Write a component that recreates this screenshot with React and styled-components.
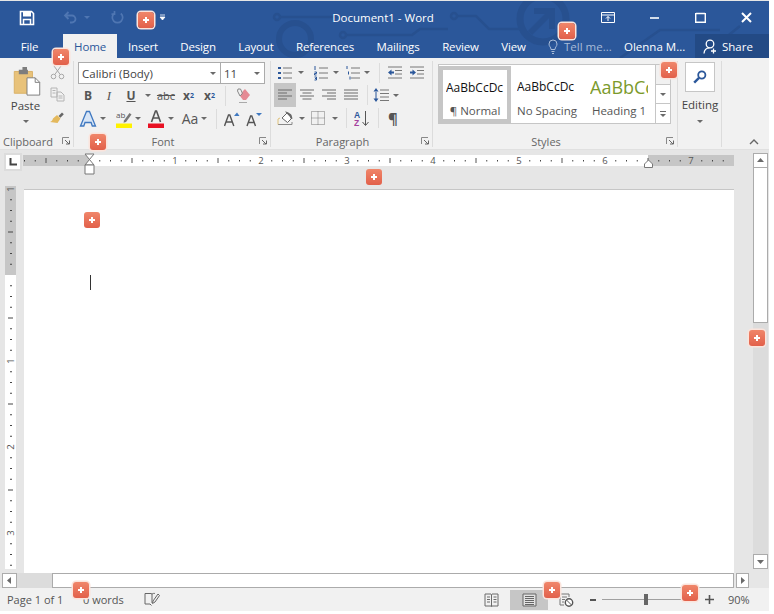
import React from 'react';
import styled, { createGlobalStyle } from 'styled-components';

const GlobalStyle = createGlobalStyle`
  html, body { margin: 0; padding: 0; background: #fff; }
  body { font-family: "Open Sans", "Liberation Sans", sans-serif; color: #444; }
`;

const Window = styled.div`
  position: relative;
  width: 769px;
  height: 610px;
  padding-top: 1px;
  display: flex;
  flex-direction: column;
  overflow: hidden;
  background: #e6e6e6;
`;

const Marker = styled.div`
  position: absolute;
  left: ${(p) => p.$x - 8}px;
  top: ${(p) => p.$y - 8}px;
  width: 16px;
  height: 16px;
  box-sizing: content-box;
  border-radius: 3px;
  background: linear-gradient(#f0866a, #e2604a);
  display: flex;
  align-items: center;
  justify-content: center;
  z-index: 5;
  ${(p) => p.$ring && 'box-shadow: 0 0 0 1.5px #fbe4dc;'}
  &::before, &::after {
    content: '';
    position: absolute;
    background: #fff;
  }
  &::before { width: 6px; height: 2px; }
  &::after { width: 2px; height: 6px; }
`;

/* title bar */
const Head = styled.div`
  position: relative;
  background: #2b579a;
  color: #fff;
`;
const Circuit = styled.svg`
  position: absolute;
  left: 0;
  top: 0;
  width: 769px;
  height: 57px;
`;
const TitleRow = styled.div`
  position: relative;
  height: 33px;
  display: flex;
  align-items: center;
`;
const Quick = styled.div`
  width: 270px;
  display: flex;
  align-items: center;
  padding-left: 19px;
  box-sizing: border-box;
`;
const QuickSlot = styled.div`
  width: ${(p) => p.$w}px;
  margin-left: ${(p) => p.$ml || 0}px;
  display: flex;
  justify-content: center;
`;
const DocTitle = styled.div`
  width: 226px;
  text-align: center;
  font-size: 11.5px;
  white-space: nowrap;
`;
const WinButtons = styled.div`
  flex: 1;
  display: flex;
  justify-content: flex-end;
`;
const WinButton = styled.div`
  width: 46px;
  display: flex;
  justify-content: center;
`;
const TabRow = styled.div`
  position: relative;
  height: 24px;
  display: flex;
  align-items: stretch;
`;
const Tab = styled.div`
  width: ${(p) => p.$w}px;
  margin-right: ${(p) => p.$mr || 0}px;
  display: flex;
  align-items: center;
  justify-content: center;
  font-size: 11.5px;
  letter-spacing: -0.15px;
  white-space: nowrap;
  ${(p) => p.$active && 'background: #f1f1f1; color: #2b579a;'}
`;
const TellMe = styled.div`
  width: 76px;
  margin-left: 11px;
  display: flex;
  align-items: center;
  gap: 6px;
  font-size: 11.5px;
  color: #a9bcd8;
`;
const Account = styled.div`
  width: 71px;
  display: flex;
  align-items: center;
  font-size: 11.5px;
  white-space: nowrap;
`;
const Share = styled.div`
  flex: 1;
  display: flex;
  align-items: center;
  gap: 4px;
  padding-left: 8px;
  background: #234a85;
  font-size: 11.5px;
`;

/* ribbon */
const Ribbon = styled.div`
  position: relative;
  height: 92px;
  background: #f1f1f1;
  display: flex;
  border-bottom: 1px solid #e0e0e0;
  box-sizing: border-box;
`;
const Group = styled.div`
  width: ${(p) => p.$w}px;
  flex: none;
  box-sizing: border-box;
  border-right: 1px solid #dcdcdc;
  margin: 3px 0 2px;
  display: flex;
  flex-direction: column;
`;
const GroupBody = styled.div`
  height: 72px;
  flex: none;
  display: flex;
`;
const GroupFoot = styled.div`
  flex: 1;
  display: flex;
  align-items: center;
  justify-content: ${(p) => (p.$left ? 'flex-start' : 'center')};
  font-size: 11px;
  color: #666;
  position: relative;
  padding-left: ${(p) => (p.$left ? 3 : 0)}px;
  padding-right: ${(p) => (p.$left ? 0 : 18)}px;
  margin-top: 1px;
`;
const Launcher = styled.svg`
  position: absolute;
  right: 3px;
  top: 3px;
  width: 8px;
  height: 8px;
`;
const PasteCol = styled.div`
  width: 51px;
  margin-right: -2px;
  padding-top: 5px;
  display: flex;
  flex-direction: column;
  align-items: center;
  font-size: 11.5px;
  color: #444;
`;
const PasteImage = styled.div`
  margin-left: 3px;
  height: 30px;
`;
const PasteLabel = styled.div`
  margin: 2px 0 6px;
  line-height: 16px;
`;
const ClipCol = styled.div`
  width: 16px;
  padding-top: 4px;
  display: flex;
  flex-direction: column;
  gap: 7px;
  align-items: center;
`;
const ToolStack = styled.div`
  padding: ${(p) => p.$pad || '1px 0 0 4px'};
  display: flex;
  flex-direction: column;
`;
const ComboRow = styled.div`
  display: flex;
  height: 22px;
  margin-bottom: 1px;
`;
const Combo = styled.div`
  width: ${(p) => p.$w}px;
  box-sizing: border-box;
  background: #fff;
  border: 1px solid #ababab;
  ${(p) => p.$tail && 'border-left: none;'}
  display: flex;
  align-items: center;
  justify-content: space-between;
  padding: 0 4px 0 3px;
  font-size: 11.5px;
  color: #444;
`;
const ToolRow = styled.div`
  display: flex;
  align-items: center;
  height: ${(p) => p.$h || 21}px;
`;
const Tool = styled.div`
  width: ${(p) => p.$w || 22}px;
  margin-left: ${(p) => p.$ml || 0}px;
  height: 100%;
  flex: none;
  display: flex;
  align-items: center;
  justify-content: center;
  color: #555;
  font-size: ${(p) => p.$size || 12}px;
  font-weight: ${(p) => (p.$bold ? 700 : 400)};
  font-style: ${(p) => (p.$italic ? 'italic' : 'normal')};
  ${(p) => p.$under && 'text-decoration: underline;'}
  ${(p) => p.$strike && 'text-decoration: line-through;'}
  ${(p) => p.$on && 'background: #c6c6c6;'}
  font-family: ${(p) => (p.$serif ? '"Liberation Serif", serif' : 'inherit')};
  sub, sup { font-size: 7px; line-height: 0; color: #2b579a; }
`;
const Caret = styled.span`
  width: 0;
  height: 0;
  flex: none;
  display: inline-block;
  border-left: 3px solid transparent;
  border-right: 3px solid transparent;
  border-top: 3px solid ${(p) => p.$color || '#6a6a6a'};
`;
const CaretSlot = styled.div`
  width: ${(p) => p.$w || 12}px;
  flex: none;
  display: flex;
  justify-content: center;
`;
const Sep = styled.div`
  width: 1px;
  height: 20px;
  flex: none;
  background: #dcdcdc;
  margin-left: ${(p) => p.$m ?? 5}px;
  margin-right: ${(p) => p.$mr ?? p.$m ?? 5}px;
`;
const Gallery = styled.div`
  margin: 3px 0 0 5px;
  width: 233px;
  height: 60px;
  box-sizing: border-box;
  background: #fff;
  border: 1px solid #c6c6c6;
  display: flex;
`;
const StyleItem = styled.div`
  width: 72px;
  flex: none;
  box-sizing: border-box;
  display: flex;
  flex-direction: column;
  padding-top: 9px;
  white-space: nowrap;
  ${(p) => p.$on && 'border: 4px solid #c6c6c6; padding-top: 5px; margin-top: 1px; height: 57px;'}
`;
const StyleSample = styled.div`
  box-sizing: content-box;
  width: ${(p) => p.$clip}px;
  margin-left: ${(p) => p.$ml}px;
  height: 26px;
  line-height: 26px;
  overflow: hidden;
  font-size: ${(p) => (p.$heading ? 18 : 12)}px;
  color: ${(p) => (p.$heading ? '#7b9a2c' : '#111')};
`;
const StyleName = styled.div`
  margin-top: 3px;
  text-align: center;
  font-size: 11.5px;
  line-height: 16px;
  color: #555;
`;
const GalleryArrows = styled.div`
  margin-left: auto;
  width: 15px;
  display: flex;
  flex-direction: column;
  border-left: 1px solid #c6c6c6;
`;
const GalleryArrow = styled.div`
  flex: 1;
  display: flex;
  align-items: center;
  justify-content: center;
  flex-direction: column;
  gap: 2px;
  background: ${(p) => (p.$off ? '#f1f1f1' : '#fff')};
  & + & { border-top: 1px solid #c6c6c6; }
`;
const Dash = styled.span`
  width: 6px;
  height: 1px;
  background: #6a6a6a;
`;
const EditingCol = styled.div`
  width: 44px;
  display: flex;
  flex-direction: column;
  align-items: center;
  font-size: 11.5px;
`;
const EditingIcon = styled.div`
  width: 30px;
  height: 30px;
  margin-top: 1px;
  box-sizing: border-box;
  background: #fff;
  border: 1px solid #c6c6c6;
  display: flex;
  align-items: center;
  justify-content: center;
`;
const EditingLabel = styled.div`
  margin: 5px 0 7px;
  line-height: 16px;
`;
const Collapse = styled.svg`
  position: absolute;
  right: 10px;
  bottom: 4px;
  width: 10px;
  height: 6px;
`;

/* workspace */
const Work = styled.div`
  flex: 1;
  display: flex;
  min-height: 0;
`;
const WorkMain = styled.div`
  width: 753px;
  display: flex;
  flex-direction: column;
`;
const RulerRow = styled.div`
  height: 38px;
  padding: 3px 0 0 4px;
  box-sizing: border-box;
  display: flex;
  align-items: flex-start;
`;
const TabStop = styled.div`
  width: 18px;
  height: 18px;
  margin-right: 1px;
  flex: none;
  box-sizing: border-box;
  background: #fff;
  border: 2px solid #dcdcdc;
  display: flex;
  align-items: center;
  justify-content: center;
`;
const RulerSvg = styled.svg`
  display: block;
  margin-top: 1px;
  overflow: visible;
`;
const DocRow = styled.div`
  flex: 1;
  display: flex;
  min-height: 0;
`;
const VRuler = styled.svg`
  margin: -2px 8px 0 5px;
  flex: none;
  display: block;
`;
const Sheet = styled.div`
  position: relative;
  width: 710px;
  margin-top: 1px;
  background: #fff;
  border-top: 1px solid #c6c6c6;
`;
const Cursor = styled.div`
  position: absolute;
  left: 66px;
  top: 85px;
  width: 1px;
  height: 15px;
  background: #333;
`;
const VScroll = styled.div`
  width: 15px;
  margin-top: 3px;
  display: flex;
  flex-direction: column;
`;
const ScrollBtn = styled.div`
  height: 15px;
  flex: none;
  box-sizing: border-box;
  background: #fff;
  border: 1px solid #ababab;
  display: flex;
  align-items: center;
  justify-content: center;
`;
const VThumb = styled.div`
  height: 155px;
  background: #fff;
  border: 1px solid #ababab;
  border-top: none;
  box-sizing: border-box;
`;
const VTrack = styled.div`
  height: 231px;
  background: #dcdcdc;
`;
const HScroll = styled.div`
  height: 15px;
  flex: none;
  padding-left: 2px;
  display: flex;
`;
const HBtn = styled(ScrollBtn)`
  width: ${(p) => p.$w || 15}px;
  margin-left: ${(p) => p.$ml || 0}px;
`;
const HTrack = styled.div`
  width: 35px;
  background: #dcdcdc;
`;
const HThumb = styled.div`
  width: 682px;
  box-sizing: border-box;
  background: #fff;
  border: 1px solid #ababab;
`;
const Status = styled.div`
  height: 23px;
  flex: none;
  background: #f1f1f1;
  display: flex;
  align-items: center;
  font-size: 11px;
  color: #555;
  white-space: nowrap;
`;
const StatusText = styled.div`
  width: ${(p) => p.$w}px;
  padding-left: ${(p) => p.$pl || 0}px;
  margin-left: ${(p) => p.$ml || 0}px;
  flex: none;
  box-sizing: border-box;
`;
const StatusIcon = styled.div`
  width: ${(p) => p.$w}px;
  margin-left: ${(p) => p.$ml || 0}px;
  height: 20px;
  flex: none;
  display: flex;
  align-items: center;
  justify-content: center;
  ${(p) => p.$on && 'background: #c6c6c6;'}
`;
const Zoomer = styled.div`
  position: relative;
  width: 80px;
  height: 1px;
  flex: none;
  background: #a0a0a0;
`;
const ZoomThumb = styled.div`
  position: absolute;
  left: 42px;
  top: -5px;
  width: 4px;
  height: 11px;
  background: #666;
`;

/* icons */
const Svg = ({ w = 16, h = 16, vb, children }) => (
  <svg width={w} height={h} viewBox={vb || `0 0 ${w} ${h}`} fill="none">{children}</svg>
);

const Save = () => (
  <Svg>
    <path d="M1.5 1.5h11l2 2v11h-13z" stroke="#fff" strokeWidth="1.6" />
    <path d="M4 2h8v4.5H4z" fill="#fff" />
    <path d="M4.5 14v-4.5h7V14" stroke="#fff" strokeWidth="1.5" />
  </Svg>
);
const Undo = () => (
  <Svg w={15} h={15}>
    <path d="M5.5 2 2 5.5 5.5 9M2.5 5.5h6.5a3.5 3.5 0 0 1 0 7H7" stroke="#4f76b2" strokeWidth="1.8" />
  </Svg>
);
const Redo = () => (
  <Svg w={15} h={15}>
    <path d="M4.2 3.5a5.2 5.2 0 1 0 6.6 0M4.5 1v3.2H1.5" stroke="#4f76b2" strokeWidth="1.7" />
  </Svg>
);
const Bulb = () => (
  <Svg w={10} h={15}>
    <path d="M3 10.5C3 8 1 7.5 1 5a4 4 0 0 1 8 0c0 2.5-2 3-2 5.5zM3.5 12.5h3M4 14.5h2" stroke="#a9bcd8" />
  </Svg>
);
const Person = () => (
  <Svg w={15} h={15}>
    <circle cx="7" cy="5" r="3.8" stroke="#fff" strokeWidth="1.3" />
    <path d="M1 14.5c.3-3.5 2.5-5.5 5.5-5.6M10.5 9.5v5M8 12h5" stroke="#fff" strokeWidth="1.3" />
  </Svg>
);
const PasteIcon = () => (
  <Svg w={28} h={30} vb="0 0 30 33">
    <path d="M1 6h20v24H1z" fill="#e8c27a" stroke="#d8ae62" />
    <path d="M7 4h8V1H10v3M6 4h10v5H6z" fill="#7d7d7d" />
    <path d="M15 13h9l5 5v14H15z" fill="#fff" stroke="#777" />
    <path d="M24 13v5h5" stroke="#777" />
  </Svg>
);
const Scissors = () => (
  <Svg w={15} h={15}>
    <circle cx="3.5" cy="11.5" r="2.3" stroke="#a8a8a8" />
    <circle cx="11.5" cy="11.5" r="2.3" stroke="#a8a8a8" />
    <path d="M4.8 9.5 11 1M10.2 9.5 4 1" stroke="#a8a8a8" />
  </Svg>
);
const CopyIcon = () => (
  <Svg w={15} h={15}>
    <path d="M1 1h6v9H1zM7 5h4l3 3v6H7z" stroke="#b4b4b4" fill="#f1f1f1" />
    <path d="M8.5 9h4M8.5 11h4M2.5 3.5h3M2.5 6h3" stroke="#b4b4b4" />
  </Svg>
);
const Painter = () => (
  <Svg>
    <path d="M9.5 7 13 3.5l1.8 1.7L11.4 8.8z" fill="#666" />
    <path d="M4 9.5 8 6l3.5 3.5-3 4.5L1 13c1.5-.3 2.5-1.8 3-3.5z" fill="#e4b95d" />
  </Svg>
);
const Eraser = () => (
  <Svg>
    <path d="M8 3 10 1l5 6-4 5H8L5 8z" fill="#e58a94" />
    <path d="M3 1h2.5l2 4.5L5 8 2.5 3z" stroke="#888" />
    <path d="M4 14.5h8" stroke="#aaa" />
  </Svg>
);
const TextEffect = () => (
  <Svg w={18} h={18}>
    <path d="M1.5 16 7.5 1.5h3l6 14.5h-3.2l-1.2-3.5H6l-1.2 3.5z" fill="#d7e5f6" stroke="#3f78c0" strokeWidth="1.3" />
  </Svg>
);
const Highlight = () => (
  <Svg w={16} h={18}>
    <text x="0" y="8" fontSize="8" fill="#555" fontFamily="Open Sans, sans-serif">ab</text>
    <path d="M8 10.5 13.5 3l2 1.5-5.5 7.5-2.5.8z" fill="#777" />
    <path d="M0 13.5h16V18H0z" fill="#fff200" />
  </Svg>
);
const FontColor = () => (
  <Svg w={16} h={18}>
    <path d="m3.5 12 4-11h1l4 11M5.2 8h5.6" stroke="#555" strokeWidth="1.6" />
    <path d="M0 13.5h16V18H0z" fill="#e81123" />
  </Svg>
);
const GrowFont = ({ down }) => (
  <Svg w={16} h={16}>
    <path d={down ? 'm1 15 3.6-10h1.2L9.5 15M2.6 11.5h5.2' : 'm0.5 15 4-11h1.3l4 11M2.4 11h6'} stroke="#555" strokeWidth="1.4" />
    <path d={down ? 'M10 2h6l-3 3z' : 'm10 5 3-3.5L15.5 5z'} fill="#3f78c0" />
  </Svg>
);
const ListLines = ({ kind }) => (
  <Svg>
    <path d="M6 3h9M6 8h9M6 13h9" stroke="#777" />
    {kind === 'bullet' && <path d="M1 2h3v2H1zM1 7h3v2H1zM1 12h3v2H1z" fill="#2b579a" />}
    {kind === 'number' && <path d="M2 1v4M1.5 7h2v1.5h-2V10h2M1.5 12h2v3h-2M2 13.5h1.5" stroke="#2b579a" />}
    {kind === 'multi' && <path d="M2 1v3M3.5 6.5v3M5 11.5v3" stroke="#2b579a" />}
  </Svg>
);
const Indent = ({ out }) => (
  <Svg>
    <path d="M1 2h14M8 5.5h7M8 9h7M1 13h14" stroke="#777" />
    <path d={out ? 'M1 7.5 4.5 4.5v2H7v2H4.5v2z' : 'M7 7.5 3.5 4.5v2H1v2h2.5v2z'} fill="#2b579a" />
  </Svg>
);
const Align = ({ rows }) => (
  <Svg>
    <path d={rows} stroke="#6a6a6a" />
  </Svg>
);
const Spacing = () => (
  <Svg>
    <path d="M7 3h9M7 6.5h9M7 10h9M7 13.5h9" stroke="#777" />
    <path d="M3 1 .5 4.5h5zM3 15 .5 11.5h5zM2.5 4h1v8h-1z" fill="#2b579a" />
  </Svg>
);
const Shading = () => (
  <Svg w={18} h={16}>
    <path d="m5 8 5-5 5 5-4.5 4.5z" fill="#fff" stroke="#666" />
    <path d="M8 1.5c2.5 0 6 2.5 6.5 3.5l1 3.5c-1 1-2.5 0-2.5-1.5" fill="#666" />
    <path d="M1 14.5h14V12" stroke="#888" />
    <path d="M1 14.5V9l2-1" stroke="#e0c27a" />
  </Svg>
);
const Borders = () => (
  <Svg>
    <path d="M1.5 1.5h13v13h-13zM8 1.5v13M1.5 8h13" stroke="#777" strokeDasharray="1 1" />
  </Svg>
);
const Sort = () => (
  <Svg w={16} h={17}>
    <text x="0" y="7.5" fontSize="8.5" fontWeight="700" fill="#2b579a" fontFamily="Liberation Sans, sans-serif">A</text>
    <text x="0" y="16" fontSize="8.5" fontWeight="700" fill="#a6419e" fontFamily="Liberation Sans, sans-serif">Z</text>
    <path d="M11.5 1v14M8.5 12l3 3.5 3-3.5" stroke="#555" />
  </Svg>
);
const Magnifier = () => (
  <Svg w={14} h={14}>
    <circle cx="8.8" cy="5" r="3.6" stroke="#2b579a" strokeWidth="1.8" fill="#fff" />
    <path d="M6 7.8 1.2 12.6" stroke="#2b579a" strokeWidth="2.4" />
  </Svg>
);
const Arrow = ({ dir }) => {
  const d = { up: 'M1 6 4.5 2 8 6z', down: 'M1 3h7L4.5 7z', left: 'M6 1v7L2 4.5z', right: 'M3 1v7l4-3.5z' }[dir];
  return <Svg w={9} h={9}><path d={d} fill="#6a6a6a" /></Svg>;
};
const Proof = () => (
  <Svg w={16} h={15}>
    <path d="M8 2 7 1.5H1V12h5l1.5 1.5M8 2v9M8 2c1-.7 2-.7 3-.5" stroke="#666" />
    <path d="M14 2 9 9l-.5 2.5L11 10l4.5-6.5z" stroke="#666" />
  </Svg>
);
const ReadView = () => (
  <Svg w={15} h={14}>
    <path d="M1 1h6l.5.7L8 1h6v12H8l-.5.7L7 13H1zM7.5 2v11" stroke="#6a6a6a" />
    <path d="M3 4h3M3 6.5h3M3 9h3M9.5 4h3M9.5 6.5h3M9.5 9h3" stroke="#6a6a6a" />
  </Svg>
);
const PrintView = () => (
  <Svg w={15} h={14}>
    <path d="M1 1h13v12H1z" stroke="#666" fill="#e2e2e2" />
    <path d="M3 3.5h9M3 5.5h9M3 7.5h9M3 9.5h9M3 11.5h9" stroke="#666" />
  </Svg>
);
const WebView = () => (
  <Svg w={15} h={14}>
    <path d="M1 1h9v3M1 1v11h4M3 4h5M3 6.5h3M3 9h2" stroke="#777" />
    <circle cx="10" cy="9.5" r="3.7" stroke="#555" fill="#fff" strokeWidth="1.4" />
    <path d="m7.5 7 5 5" stroke="#555" />
  </Svg>
);
const LauncherMark = () => (
  <Launcher viewBox="0 0 8 8" fill="none">
    <path d="M.5 7V.5H7" stroke="#888" />
    <path d="M3 3 7 7M4 7h3.5V3.5" stroke="#666" />
  </Launcher>
);

// 8 marks to the inch, numbers on the inch, longer mark on the half
const rulerTicks = () => {
  const out = [];
  for (let k = -6; k <= 59; k++) {
    const x = 66 + k * 10.75;
    if (k === 0) continue;
    if (k % 8 === 0 && k > 0) {
      out.push(<text key={k} x={x} y="10" fontSize="9.5" fill="#555" textAnchor="middle" fontFamily="Open Sans, sans-serif">{k / 8}</text>);
    } else if (k % 4 === 0) {
      out.push(<path key={k} d={`M${x} 4v5`} stroke="#555" />);
    } else {
      out.push(<path key={k} d={`M${x} 6v1.5`} stroke="#444" />);
    }
  }
  return out;
};

const Ruler = () => (
  <RulerSvg width="711" height="26" viewBox="0 0 711 26">
    <rect x="0" y="1" width="711" height="11" fill="#c6c6c6" />
    <rect x="66" y="1" width="559" height="11" fill="#fff" />
    {rulerTicks()}
    <path d="M62 0h9l-9 11h9z" fill="#fff" stroke="#777" />
    <path d="M62 11h9v9h-9z" fill="#fff" stroke="#777" />
    <path d="m625.5 6 4 4v3.500h-8V10z" fill="#fff" stroke="#777" />
  </RulerSvg>
);

const verticalMarks = () => {
  const out = [];
  for (let k = -8; k <= 27; k++) {
    const y = 89 + k * 10.75;
    if (k === 0) continue;
    if (k % 8 === 0) {
      out.push(
        <text key={k} x="5.500" y={y + 3} fontSize="9.5" fill="#555" textAnchor="middle" fontFamily="Open Sans, sans-serif" transform={`rotate(-90 5.5 ${y})`}>
          {Math.abs(k) / 8}
        </text>
      );
    } else if (k % 4 === 0) {
      out.push(<path key={k} d={`M3 ${y}h5`} stroke="#444" />);
    } else {
      out.push(<path key={k} d={`M5 ${y}h2`} stroke="#444" />);
    }
  }
  return out;
};

const VerticalRuler = () => (
  <VRuler width="11" height="383" viewBox="0 0 11 383">
    <rect width="11" height="383" fill="#fff" />
    <rect width="11" height="89" fill="#c6c6c6" />
    {verticalMarks()}
  </VRuler>
);

export default function App() {
  return (
    <>
      <GlobalStyle />
      <Window>
        <Head>
          <Circuit viewBox="0 0 769 57" fill="none" stroke="#27508f" strokeWidth="2.5">
            <circle cx="543" cy="18" r="23" strokeWidth="7" />
            <path d="m530 32 22-22M534 10h18v18" strokeWidth="6" />
            <circle cx="295" cy="38" r="16" strokeWidth="6" />
            <circle cx="277" cy="16" r="3" />
            <path d="M280 16h62M346 34h66l8-6h28M456 15h20l13 13h32M620 57l40-28h60M700 57l40-32" />
            <circle cx="343" cy="34" r="3" />
            <circle cx="454" cy="15" r="3" />
          </Circuit>
          <TitleRow>
            <Quick>
              <QuickSlot $w={16}><Save /></QuickSlot>
              <QuickSlot $w={16} $ml={27}><Undo /></QuickSlot>
              <QuickSlot $w={8} $ml={5}><Caret $color="#4f76b2" /></QuickSlot>
              <QuickSlot $w={16} $ml={18}><Redo /></QuickSlot>
              <QuickSlot $w={8} $ml={33}>
                <Svg w={7} h={7}><path d="M1 1h5M1 3h5L3.5 6z" stroke="#fff" fill="#fff" strokeWidth=".8" /></Svg>
              </QuickSlot>
            </Quick>
            <DocTitle>Document1 - Word</DocTitle>
            <WinButtons>
              <WinButton>
                <Svg w={14} h={12}><path d="M.5.5h13v10H.5zM.5 3h13M7 9V4.5M5 6.5l2-2 2 2" stroke="#fff" /></Svg>
              </WinButton>
              <WinButton><Svg w={11} h={11}><path d="M1 6h9" stroke="#fff" strokeWidth="1.6" /></Svg></WinButton>
              <WinButton><Svg w={11} h={11}><path d="M1 1.5h9M.7 1v9.3h9.6V1" stroke="#fff" strokeWidth="1.4" /></Svg></WinButton>
              <WinButton><Svg w={11} h={11}><path d="m1 1 9 9M10 1l-9 9" stroke="#fff" strokeWidth="2" /></Svg></WinButton>
            </WinButtons>
          </TitleRow>
          <TabRow>
            <Tab $w={59} $mr={4}>File</Tab>
            <Tab $w={54} $active>Home</Tab>
            <Tab $w={52}>Insert</Tab>
            <Tab $w={58}>Design</Tab>
            <Tab $w={58}>Layout</Tab>
            <Tab $w={80}>References</Tab>
            <Tab $w={66}>Mailings</Tab>
            <Tab $w={59}>Review</Tab>
            <Tab $w={47}>View</Tab>
            <TellMe><Bulb />Tell me...</TellMe>
            <Account>Olenna M...</Account>
            <Share><Person />Share</Share>
          </TabRow>
        </Head>

        <Ribbon>
          <Group $w={74}>
            <GroupBody>
              <PasteCol>
                <PasteImage><PasteIcon /></PasteImage>
                <PasteLabel>Paste</PasteLabel>
                <Caret />
              </PasteCol>
              <ClipCol>
                <Scissors />
                <CopyIcon />
                <Painter />
              </ClipCol>
            </GroupBody>
            <GroupFoot $left>Clipboard<LauncherMark /></GroupFoot>
          </Group>

          <Group $w={197}>
            <GroupBody>
              <ToolStack>
                <ComboRow>
                  <Combo $w={143}>Calibri (Body)<Caret /></Combo>
                  <Combo $w={44} $tail>11<Caret /></Combo>
                </ComboRow>
                <ToolRow>
                  <Tool $bold $size={12} $w={20}>B</Tool>
                  <Tool $italic $serif $size={13} $w={22}>I</Tool>
                  <Tool $under $bold $size={12} $w={22}>U</Tool>
                  <CaretSlot><Caret /></CaretSlot>
                  <Tool $strike $size={11} $w={24}>abc</Tool>
                  <Tool $bold $size={12} $w={21}>x<sub>2</sub></Tool>
                  <Tool $bold $size={12} $w={21}>x<sup>2</sup></Tool>
                  <Sep $m={5} />
                  <Tool $w={22} $ml={1}><Eraser /></Tool>
                </ToolRow>
                <ToolRow $h={25}>
                  <Tool $w={20}><TextEffect /></Tool>
                  <CaretSlot $w={10}><Caret /></CaretSlot>
                  <Tool $w={22} $ml={5}><Highlight /></Tool>
                  <CaretSlot $w={6}><Caret /></CaretSlot>
                  <Tool $w={22} $ml={4}><FontColor /></Tool>
                  <CaretSlot $w={8}><Caret /></CaretSlot>
                  <Tool $w={22} $ml={4} $size={14}>Aa</Tool>
                  <CaretSlot $w={6}><Caret /></CaretSlot>
                  <Sep $m={9} $mr={5} />
                  <Tool $w={20}><GrowFont /></Tool>
                  <Tool $w={20} $ml={2}><GrowFont down /></Tool>
                </ToolRow>
              </ToolStack>
            </GroupBody>
            <GroupFoot>Font<LauncherMark /></GroupFoot>
          </Group>

          <Group $w={162}>
            <GroupBody>
              <ToolStack $pad="1px 0 0 3px">
                <ToolRow>
                  <Tool $w={22}><ListLines kind="bullet" /></Tool>
                  <CaretSlot $w={10}><Caret /></CaretSlot>
                  <Tool $w={22} $ml={4}><ListLines kind="number" /></Tool>
                  <CaretSlot $w={8}><Caret /></CaretSlot>
                  <Tool $w={20} $ml={3}><ListLines kind="multi" /></Tool>
                  <CaretSlot $w={8}><Caret /></CaretSlot>
                  <Sep $m={8} $mr={4} />
                  <Tool $w={22}><Indent out /></Tool>
                  <Tool $w={22}><Indent /></Tool>
                </ToolRow>
                <ToolRow $h={24}>
                  <Tool $w={22} $on><Align rows="M1 3h14M1 6h9M1 9h14M1 12h9" /></Tool>
                  <Tool $w={22}><Align rows="M1 3h14M3.5 6h9M1 9h14M3.5 12h9" /></Tool>
                  <Tool $w={22}><Align rows="M1 3h14M6 6h9M1 9h14M6 12h9" /></Tool>
                  <Tool $w={22}><Align rows="M1 3h14M1 6h14M1 9h14M1 12h14" /></Tool>
                  <Sep $m={5} $mr={3} />
                  <Tool $w={20}><Spacing /></Tool>
                  <CaretSlot $w={10}><Caret /></CaretSlot>
                </ToolRow>
                <ToolRow $h={22}>
                  <Tool $w={24}><Shading /></Tool>
                  <CaretSlot $w={8}><Caret /></CaretSlot>
                  <Tool $w={20} $ml={2}><Borders /></Tool>
                  <CaretSlot $w={14}><Caret /></CaretSlot>
                  <Sep $m={4} $mr={5} />
                  <Tool $w={20}><Sort /></Tool>
                  <Sep $m={6} $mr={5} />
                  <Tool $w={18} $size={15} $bold>¶</Tool>
                </ToolRow>
              </ToolStack>
            </GroupBody>
            <GroupFoot>Paragraph<LauncherMark /></GroupFoot>
          </Group>

          <Group $w={245}>
            <GroupBody>
              <Gallery>
                <StyleItem $on>
                  <StyleSample $clip={59} $ml={3}>AaBbCcDc</StyleSample>
                  <StyleName>¶ Normal</StyleName>
                </StyleItem>
                <StyleItem>
                  <StyleSample $clip={59} $ml={6}>AaBbCcDc</StyleSample>
                  <StyleName>No Spacing</StyleName>
                </StyleItem>
                <StyleItem>
                  <StyleSample $heading $clip={58} $ml={7}>AaBbCc</StyleSample>
                  <StyleName>Heading 1</StyleName>
                </StyleItem>
                <GalleryArrows>
                  <GalleryArrow $off><Caret /></GalleryArrow>
                  <GalleryArrow><Caret /></GalleryArrow>
                  <GalleryArrow><Dash /><Caret /></GalleryArrow>
                </GalleryArrows>
              </Gallery>
            </GroupBody>
            <GroupFoot>Styles<LauncherMark /></GroupFoot>
          </Group>

          <Group $w={44}>
            <EditingCol>
              <EditingIcon><Magnifier /></EditingIcon>
              <EditingLabel>Editing</EditingLabel>
              <Caret />
            </EditingCol>
          </Group>

          <Collapse viewBox="0 0 10 6" fill="none">
            <path d="m1 5 4-4 4 4" stroke="#666" strokeWidth="1.4" />
          </Collapse>
        </Ribbon>

        <Work>
          <WorkMain>
            <RulerRow>
              <TabStop>
                <Svg w={8} h={8}><path d="M1.5 0v6.500H8" stroke="#444" strokeWidth="2" /></Svg>
              </TabStop>
              <Ruler />
            </RulerRow>
            <DocRow>
              <VerticalRuler />
              <Sheet><Cursor /></Sheet>
            </DocRow>
          </WorkMain>
          <VScroll>
            <ScrollBtn><Arrow dir="up" /></ScrollBtn>
            <VThumb />
            <VTrack />
            <ScrollBtn><Arrow dir="down" /></ScrollBtn>
          </VScroll>
        </Work>

        <HScroll>
          <HBtn><Arrow dir="left" /></HBtn>
          <HTrack />
          <HThumb />
          <HBtn $w={13} $ml={2}><Arrow dir="right" /></HBtn>
        </HScroll>

        <Status>
          <StatusText $w={83} $pl={7}>Page 1 of 1</StatusText>
          <StatusText $w={61}>0 words</StatusText>
          <StatusIcon $w={16}><Proof /></StatusIcon>
          <StatusIcon $w={20} $ml={321}><ReadView /></StatusIcon>
          <StatusIcon $w={38} $ml={9} $on><PrintView /></StatusIcon>
          <StatusIcon $w={36}><WebView /></StatusIcon>
          <StatusIcon $w={18}><Svg w={8} h={8}><path d="M1 4h6" stroke="#555" strokeWidth="2" /></Svg></StatusIcon>
          <Zoomer><ZoomThumb /></Zoomer>
          <StatusIcon $w={20} $ml={17}><Svg w={9} h={9}><path d="M0 4.5h9M4.5 0v9" stroke="#555" strokeWidth="1.6" /></Svg></StatusIcon>
          <StatusText $w={30} $ml={9}>90%</StatusText>
        </Status>

        <Marker $x={146} $y={20} $ring />
        <Marker $x={61} $y={57} $ring />
        <Marker $x={98} $y={142} $ring />
        <Marker $x={374} $y={177} />
        <Marker $x={92} $y={220} />
        <Marker $x={567} $y={31} $ring />
        <Marker $x={669} $y={70} $ring />
        <Marker $x={757} $y={338} $ring />
        <Marker $x={81} $y={590} $ring />
        <Marker $x={552} $y={590} $ring />
        <Marker $x={690} $y={593} $ring />
      </Window>
    </>
  );
}
